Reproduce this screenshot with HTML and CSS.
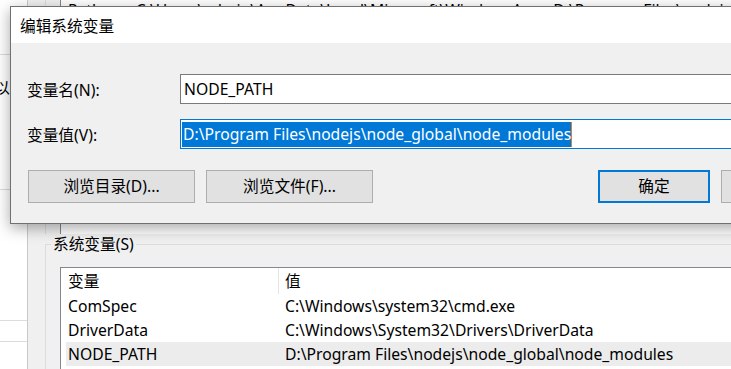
FILE: index.html
```html
<!DOCTYPE html>
<html lang="zh-CN">
<head>
<meta charset="utf-8">
<title>编辑系统变量</title>
<link rel="stylesheet" href="styles.css">
</head>
<body>
    <div class="desk">
        <div class="side">
            <div class="side-gap side-top"></div>
            <div class="side-label">可以</div>
            <div class="side-gap side-mid"></div>
            <div class="side-gap side-low"></div>
            <div class="side-gap side-end"></div>
        </div>
        <div class="win">
            <div class="upper">
                <div class="list upper-list">
                    <div class="row first">
                        <span class="cell-name">Path</span>
                        <span class="cell-val">C:\Users\admin\AppData\Local\Microsoft\WindowsApps;D:\Program Files\nodejs</span>
                    </div>
                </div>
            </div>
            <fieldset class="group">
                <legend>系统变量(S)</legend>
                <div class="list">
                    <div class="head">
                        <span class="cell-name">变量</span>
                        <span class="cell-val sep">值</span>
                    </div>
                    <div class="row">
                        <span class="cell-name">ComSpec</span>
                        <span class="cell-val">C:\Windows\system32\cmd.exe</span>
                    </div>
                    <div class="row">
                        <span class="cell-name">DriverData</span>
                        <span class="cell-val">C:\Windows\System32\Drivers\DriverData</span>
                    </div>
                    <div class="row picked">
                        <span class="cell-name">NODE_PATH</span>
                        <span class="cell-val">D:\Program Files\nodejs\node_global\node_modules</span>
                    </div>
                </div>
            </fieldset>
        </div>
    </div>

    <!-- the dialog floats over the environment window -->
    <div class="dialog">
        <div class="titlebar">编辑系统变量</div>
        <div class="dlg-body">
            <div class="line">
                <span class="lbl">变量名(N):</span>
                <div class="field">NODE_PATH</div>
            </div>
            <div class="line">
                <span class="lbl">变量值(V):</span>
                <div class="field focus"><span class="sel">D:\Program Files\nodejs\node_global\node_modules</span></div>
            </div>
            <div class="buttons">
                <div class="btn">浏览目录(D)...</div>
                <div class="btn">浏览文件(F)...</div>
                <div class="btn ok">确定</div>
                <div class="btn">取消</div>
            </div>
        </div>
    </div>
</body>
</html>
```

FILE: styles.css
```css
body{
    margin:0;
    width:731px;
    height:369px;
    overflow:hidden;
    position:relative;
    background-color:#f0f0f0;
    font-family:"Noto Sans", "Noto Sans CJK SC", sans-serif;
    font-size:15.7px;
    color:#000;
}

/* background window */
.desk{
    display:flex;
    height:100%;
}
.side{
    width:27px;
    background-color:#fff;
    border-right:1px solid #c9c9c9;
    display:flex;
    flex-direction:column;
}
.side-gap{
    border-bottom:1px solid #dcdcdc;
}
.side-top{
    height:54px;
}
.side-label{
    width:10px;
    height:24px;
    margin-top:21px;
    line-height:24px;
    direction:rtl;
    overflow:hidden;
    white-space:nowrap;
}
.side-mid{
    height:89px;
}
.side-low{
    height:130px;
}
.side-end{
    height:20px;
}

.win{
    flex:1;
    padding-left:17px;
    min-width:0;
}
.upper{
    height:234px;
    border-left:1px solid #dcdcdc;
    padding-left:14px;
    overflow:hidden;
}
.list{
    background-color:#fff;
    border:1px solid #828790;
    border-right:none;
    height:100%;
    white-space:nowrap;
}
.upper-list{
    border-top:none;
}
.row, .head{
    display:flex;
    height:24px;
    line-height:24px;
    margin-left:5px;
}
.row.first{
    line-height:20px;
}
.head{
    height:26px;
    line-height:26px;
}
.cell-name{
    width:210px;
    padding-left:2px;
}
.cell-val{
    padding-left:7px;
}
.sep{
    border-left:1px solid #e5e5e5;
    padding-left:6px;
}
.picked{
    background-color:#ececec;
}

.group{
    margin:0;
    padding:0 0 0 14px;
    border:none;
    border-top:1px solid #dcdcdc;
    border-left:1px solid #dcdcdc;
    height:140px;
}
.group legend{
    padding:0 2px;
    margin-left:-9px;
    line-height:20px;
}
.group .list{
    margin-top:13px;
}

/* dialog */
.dialog{
    position:absolute;
    left:10px;
    top:6px;
    width:839px;
    height:216px;
    border:1px solid #707070;
    background-color:#f0f0f0;
    box-shadow:0 4px 14px rgba(0,0,0,0.35);
    display:flex;
    flex-direction:column;
}
.titlebar{
    height:36px;
    line-height:38px;
    background-color:#fff;
    padding-left:9px;
}
.dlg-body{
    flex:1;
    padding:31px 17px 0 16px;
    display:flex;
    flex-direction:column;
    gap:15px;
}
.line{
    display:grid;
    grid-template-columns:153px 1fr;
    align-items:center;
}
.field{
    height:28px;
    line-height:28px;
    border:1px solid #7a7a7a;
    background-color:#fff;
    padding-left:3px;
    white-space:nowrap;
}
.field.focus{
    border-color:#0078d7;
    padding-left:1px;
    display:flex;
    align-items:center;
}
.sel{
    background-color:#0078d7;
    color:#fff;
    height:25px;
    line-height:25px;
    padding-left:1px;
    border-right:1px solid #d9812c;
}
.buttons{
    display:flex;
    gap:11px;
    margin-top:6px;
    padding-left:1px;
}
.btn{
    width:165px;
    height:31px;
    line-height:31px;
    text-align:center;
    background-color:#e1e1e1;
    border:1px solid #adadad;
}
.btn.ok{
    width:108px;
    height:29px;
    line-height:29px;
    border:2px solid #0078d7;
    margin-left:auto;
}
.btn.ok + .btn{
    width:110px;
}
```
